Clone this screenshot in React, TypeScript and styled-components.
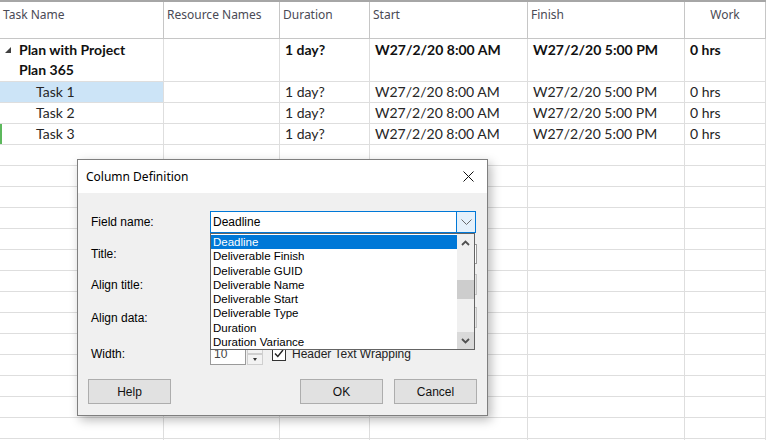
import React from 'react';
import styled, { createGlobalStyle } from 'styled-components';

const Global = createGlobalStyle`
  html, body { margin: 0; padding: 0; background: #fff; }
  body { width: 768px; height: 440px; overflow: hidden; }
`;

const Page = styled.div`
  position: relative;
  width: 768px;
  height: 440px;
  overflow: hidden;
  background: #fff;
`;

const Sheet = styled.div`
  display: grid;
  grid-template-columns: 164px 116px 90px 158px 157px 81px;
  width: 766px;
  border-top: 2px solid #a6a6a6;
`;

const HeaderCell = styled.div<{ $center?: boolean }>`
  box-sizing: border-box;
  height: 37px;
  padding: 5px 3px 0;
  border-right: 1px solid #c6c6c6;
  border-bottom: 1px solid #c6c6c6;
  font-family: 'Noto Sans', 'Open Sans', sans-serif;
  font-size: 12px;
  line-height: 16px;
  color: #4a4a55;
  text-align: ${(p) => (p.$center ? 'center' : 'left')};
`;

const Cell = styled.div<{ $bold?: boolean; $tall?: boolean; $selected?: boolean; $indent?: number; $mark?: boolean }>`
  box-sizing: border-box;
  height: ${(p) => (p.$tall ? 43 : 21)}px;
  padding: ${(p) => (p.$tall ? 1 : 0)}px 5px 0 ${(p) => p.$indent ?? 5}px;
  border-right: 1px solid #dedede;
  border-bottom: 1px solid #dedede;
  font-family: Lato, 'Noto Sans', sans-serif;
  font-size: 14px;
  line-height: 20px;
  font-weight: ${(p) => (p.$bold ? 700 : 400)};
  color: ${(p) => (p.$bold ? '#111' : '#262626')};
  background: ${(p) => (p.$selected ? '#cce4f7' : 'transparent')};
  box-shadow: ${(p) => (p.$mark ? 'inset 2px 0 0 #5cb85c' : 'none')};
  white-space: nowrap;
  overflow: hidden;
  display: flex;
  align-items: flex-start;
`;

const Collapse = styled.svg`
  flex: none;
  margin: 7px 8px 0 0;
`;

/* ---------- Dialog ---------- */

const Dialog = styled.div`
  position: absolute;
  left: 77px;
  top: 159px;
  width: 411px;
  height: 257px;
  box-sizing: border-box;
  border: 1px solid #7f7f7f;
  background: #f0f0f0;
  box-shadow: 3px 4px 10px rgba(0, 0, 0, 0.28);
  display: flex;
  flex-direction: column;
`;

const TitleBar = styled.div`
  height: 33px;
  flex: none;
  background: #fff;
  display: flex;
  align-items: center;
  justify-content: space-between;
  padding: 0 13px 0 8px;
  font-family: 'Noto Sans', 'Open Sans', sans-serif;
  font-size: 12px;
  color: #000;
`;

const Body = styled.div`
  flex: 1;
  padding: 18px 10px 0;
  display: flex;
  flex-direction: column;
  font-family: 'Liberation Sans', Arial, sans-serif;
  font-size: 12px;
  color: #000;
`;

const FormRow = styled.div<{ $top: number; $h: number }>`
  display: flex;
  align-items: center;
  margin-top: ${(p) => p.$top}px;
  height: ${(p) => p.$h}px;
`;

const Label = styled.div`
  width: 119px;
  padding-left: 3px;
  flex: none;
`;

const Combo = styled.div<{ $focus?: boolean; $w?: number }>`
  box-sizing: border-box;
  width: ${(p) => p.$w ?? 266}px;
  height: 100%;
  border: 1px solid ${(p) => (p.$focus ? '#0078d7' : '#c4c4c4')};
  background: ${(p) => (p.$focus ? '#fff' : '#e6e6e6')};
  display: flex;
  align-items: stretch;
`;

const ComboText = styled.div`
  flex: 1;
  padding-left: 2px;
  display: flex;
  align-items: center;
`;

const ComboButton = styled.div`
  width: 18px;
  background: #e5f1fb;
  border-left: 1px solid #0078d7;
  display: flex;
  align-items: center;
  justify-content: center;
`;

const TextBox = styled.div<{ $w: number }>`
  box-sizing: border-box;
  width: ${(p) => p.$w}px;
  height: 100%;
  border: 1px solid #9a9a9a;
  background: #fff;
  padding-left: 3px;
  display: flex;
  align-items: center;
  color: #444;
`;

const Spinner = styled.div`
  width: 16px;
  height: 100%;
  margin-left: 1px;
  display: flex;
  flex-direction: column;
`;

const SpinHalf = styled.div`
  flex: 1;
  box-sizing: border-box;
  border: 1px solid #cfcfcf;
  background: #f3f3f3;
  display: flex;
  align-items: center;
  justify-content: center;
`;

const CheckBox = styled.div`
  box-sizing: border-box;
  width: 14px;
  height: 14px;
  margin-left: 9px;
  border: 1px solid #333;
  background: #fff;
  display: flex;
  align-items: center;
  justify-content: center;
`;

const CheckLabel = styled.div`
  margin-left: 6px;
  color: #222;
`;

const ButtonRow = styled.div`
  display: flex;
  gap: 11px;
  margin-top: 14px;
  height: 25px;
`;

const Button = styled.div<{ $push?: boolean }>`
  box-sizing: border-box;
  width: 83px;
  height: 25px;
  margin-left: ${(p) => (p.$push ? 'auto' : '0')};
  border: 1px solid #adadad;
  background: #e1e1e1;
  display: flex;
  align-items: center;
  justify-content: center;
  color: #111;
`;

/* ---------- Dropdown list (floats over the dialog) ---------- */

const ListBox = styled.div`
  position: absolute;
  left: 132px;
  top: 73px;
  width: 265px;
  height: 117px;
  box-sizing: border-box;
  border: 1px solid #646464;
  background: #fff;
  display: flex;
  font-family: 'Liberation Sans', Arial, sans-serif;
  font-size: 11.5px;
`;

const Items = styled.div`
  flex: 1;
  padding-top: 1px;
  display: flex;
  flex-direction: column;
`;

const Item = styled.div<{ $active?: boolean }>`
  height: 14.25px;
  line-height: 14.25px;
  padding-left: 2px;
  white-space: nowrap;
  background: ${(p) => (p.$active ? '#0078d7' : 'transparent')};
  color: ${(p) => (p.$active ? '#fff' : '#000')};
`;

const ScrollBar = styled.div`
  width: 17px;
  background: #f0f0f0;
  display: flex;
  flex-direction: column;
`;

const ScrollBtn = styled.div<{ $hover?: boolean }>`
  height: 17px;
  flex: none;
  background: ${(p) => (p.$hover ? '#dadada' : '#f0f0f0')};
  display: flex;
  align-items: center;
  justify-content: center;
`;

const Track = styled.div`
  flex: 1;
`;

const Thumb = styled.div`
  margin: 29px 0 0 0;
  height: 19px;
  background: #cdcdcd;
`;

const columns = ['Task Name', 'Resource Names', 'Duration', 'Start', 'Finish', 'Work'];

const tasks = ['Task 1', 'Task 2', 'Task 3'];

const fields = [
  'Deadline',
  'Deliverable Finish',
  'Deliverable GUID',
  'Deliverable Name',
  'Deliverable Start',
  'Deliverable Type',
  'Duration',
  'Duration Variance',
];

const Chevron = ({ up, bold }: { up?: boolean; bold?: boolean }) =>
  bold ? (
    <svg width="9" height="6" viewBox="0 0 9 6">
      <polyline
        points={up ? '1,5 4.5,1.5 8,5' : '1,1 4.5,4.5 8,1'}
        fill="none"
        stroke="#505050"
        strokeWidth="1.8"
      />
    </svg>
  ) : (
    <svg width="11" height="6" viewBox="0 0 11 6">
      <polyline points="0.5,0.5 5.5,5.5 10.5,0.5" fill="none" stroke="#6a6a6a" strokeWidth="1" />
    </svg>
  );

export default function App() {
  const empty = Array.from({ length: 15 });
  return (
    <Page>
      <Global />
      <Sheet>
        {columns.map((c) => (
          <HeaderCell key={c} $center={c === 'Work'}>
            {c}
          </HeaderCell>
        ))}

        <Cell $bold $tall>
          <Collapse width="6" height="6" viewBox="0 0 6 6">
            <polygon points="6,0 6,6 0,6" fill="#404040" />
          </Collapse>
          <span>
            Plan with Project
            <br />
            Plan 365
          </span>
        </Cell>
        <Cell $tall />
        <Cell $bold $tall>1 day?</Cell>
        <Cell $bold $tall>W27/2/20 8:00 AM</Cell>
        <Cell $bold $tall>W27/2/20 5:00 PM</Cell>
        <Cell $bold $tall>0 hrs</Cell>

        {tasks.map((t, i) => (
          <React.Fragment key={t}>
            <Cell $indent={36} $selected={i === 0} $mark={i === 2}>
              {t}
            </Cell>
            <Cell />
            <Cell>1 day?</Cell>
            <Cell>W27/2/20 8:00 AM</Cell>
            <Cell>W27/2/20 5:00 PM</Cell>
            <Cell>0 hrs</Cell>
          </React.Fragment>
        ))}

        {empty.map((_, r) => (
          <React.Fragment key={r}>
            {columns.map((c) => (
              <Cell key={c} />
            ))}
          </React.Fragment>
        ))}
      </Sheet>

      <Dialog>
        <TitleBar>
          <span>Column Definition</span>
          <svg width="11" height="11" viewBox="0 0 11 11">
            <path d="M0.5 0.5 L10.5 10.5 M10.5 0.5 L0.5 10.5" stroke="#111" strokeWidth="1" />
          </svg>
        </TitleBar>
        <Body>
          <FormRow $top={0} $h={22}>
            <Label>Field name:</Label>
            <Combo $focus>
              <ComboText>Deadline</ComboText>
              <ComboButton>
                <Chevron />
              </ComboButton>
            </Combo>
          </FormRow>
          <FormRow $top={11} $h={20}>
            <Label>Title:</Label>
            <TextBox $w={267} />
          </FormRow>
          <FormRow $top={10} $h={21}>
            <Label>Align title:</Label>
            <Combo $w={267} />
          </FormRow>
          <FormRow $top={12} $h={21}>
            <Label>Align data:</Label>
            <Combo $w={267} />
          </FormRow>
          <FormRow $top={14} $h={23}>
            <Label>Width:</Label>
            <TextBox $w={36}>10</TextBox>
            <Spinner>
              <SpinHalf />
              <SpinHalf>
                <svg width="4" height="3" viewBox="0 0 4 3">
                  <polygon points="0,0 4,0 2,3" fill="#333" />
                </svg>
              </SpinHalf>
            </Spinner>
            <CheckBox>
              <svg width="10" height="9" viewBox="0 0 10 9">
                <polyline points="1,4.5 3.8,7.5 9,1" fill="none" stroke="#222" strokeWidth="1.4" />
              </svg>
            </CheckBox>
            <CheckLabel>Header Text Wrapping</CheckLabel>
          </FormRow>
          <ButtonRow>
            <Button>Help</Button>
            <Button $push>OK</Button>
            <Button>Cancel</Button>
          </ButtonRow>
        </Body>

        <ListBox>
          <Items>
            {fields.map((f, i) => (
              <Item key={f} $active={i === 0}>
                {f}
              </Item>
            ))}
          </Items>
          <ScrollBar>
            <ScrollBtn>
              <Chevron up bold />
            </ScrollBtn>
            <Track>
              <Thumb />
            </Track>
            <ScrollBtn $hover>
              <Chevron bold />
            </ScrollBtn>
          </ScrollBar>
        </ListBox>
      </Dialog>
    </Page>
  );
}
